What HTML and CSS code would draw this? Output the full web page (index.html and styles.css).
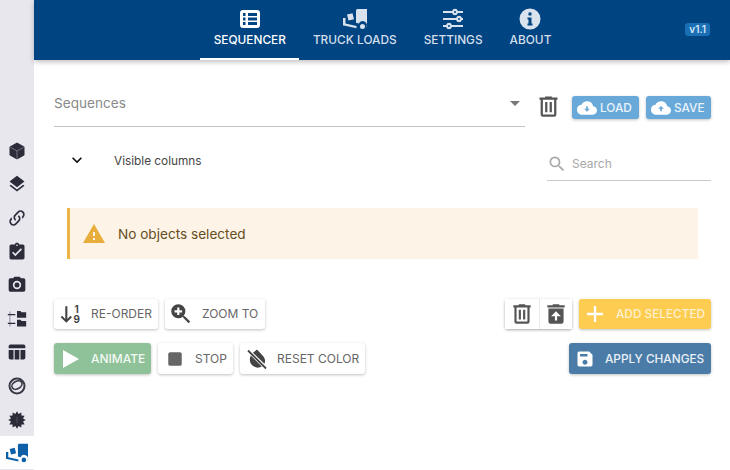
FILE: index.html
```html
<!DOCTYPE html>
<html lang="en">
<head>
<meta charset="utf-8">
<title>Sequencer</title>
<link rel="stylesheet" href="styles.css">
</head>
<body>
<div class="app">
  <aside class="rail">
    <div class="rail-item"><svg viewBox="0 0 24 24"><path d="M21 16.500c0 .38-.21.71-.53.88l-7.900 4.440c-.16.12-.36.18-.57.18s-.41-.06-.57-.18l-7.900-4.440A1 1 0 0 1 3 16.500v-9c0-.38.21-.71.53-.88l7.900-4.440c.16-.12.36-.18.57-.18s.41.06.57.18l7.900 4.440c.32.17.53.5.53.88v9z"/><path class="cut" d="M4 7.500l8 4.500 8-4.500M12 12v9.500"/></svg></div>
    <div class="rail-item"><svg viewBox="0 0 24 24"><path d="M12 16l7.360-5.730L21 9l-9-7-9 7 1.630 1.270M12 18.540l-7.380-5.730L3 14.070l9 7 9-7-1.630-1.270L12 18.540z"/></svg></div>
    <div class="rail-item"><svg viewBox="0 0 24 24"><path d="M10.590 13.410c.41.390.41 1.030 0 1.420-.39.390-1.030.390-1.420 0a5.003 5.003 0 0 1 0-7.070l3.540-3.540a5.003 5.003 0 0 1 7.070 0 5.003 5.003 0 0 1 0 7.070l-1.490 1.490c.01-.820-.12-1.640-.4-2.420l.47-.48a2.982 2.982 0 0 0 0-4.240 2.982 2.982 0 0 0-4.240 0l-3.530 3.530a2.982 2.982 0 0 0 0 4.240m2.820-4.240c.39-.39 1.030-.39 1.420 0a5.003 5.003 0 0 1 0 7.070l-3.540 3.540a5.003 5.003 0 0 1-7.070 0 5.003 5.003 0 0 1 0-7.070l1.490-1.490c-.01.820.12 1.640.4 2.430l-.47.470a2.982 2.982 0 0 0 0 4.240 2.982 2.982 0 0 0 4.240 0l3.530-3.530a2.982 2.982 0 0 0 0-4.240.973.973 0 0 1 0-1.420z"/></svg></div>
    <div class="rail-item"><svg viewBox="0 0 24 24"><path d="M19 3h-4.180C14.400 1.840 13.300 1 12 1c-1.300 0-2.400.84-2.820 2H5c-1.100 0-2 .9-2 2v14c0 1.100.9 2 2 2h14c1.100 0 2-.9 2-2V5c0-1.100-.9-2-2-2zm-7 0c.55 0 1 .45 1 1s-.45 1-1 1-1-.45-1-1 .45-1 1-1zm-2 14l-4-4 1.410-1.410L10 14.170l6.590-6.590L18 9l-8 8z"/></svg></div>
    <div class="rail-item"><svg viewBox="0 0 24 24"><path d="M4 4h3l2-2h6l2 2h3a2 2 0 0 1 2 2v12a2 2 0 0 1-2 2H4a2 2 0 0 1-2-2V6a2 2 0 0 1 2-2m8 3a5 5 0 0 0-5 5 5 5 0 0 0 5 5 5 5 0 0 0 5-5 5 5 0 0 0-5-5m0 2a3 3 0 0 1 3 3 3 3 0 0 1-3 3 3 3 0 0 1-3-3 3 3 0 0 1 3-3z"/></svg></div>
    <div class="rail-item"><svg viewBox="0 0 24 24"><path class="tree" d="M3.500 3v18"/><path d="M1 6h9v1.500H1zM1 16.500h9V18H1z"/><path d="M12 2.500h4l1.500 1.500H23v6.500H12zM12 13h4l1.500 1.500H23V21H12z"/></svg></div>
    <div class="rail-item"><svg viewBox="0 0 24 24"><path d="M4 3h16a2 2 0 0 1 2 2v2.500H2V5a2 2 0 0 1 2-2zM2 9.500h5.800V21H4a2 2 0 0 1-2-2zM9.200 9.500h5.600V21H9.200zM16.200 9.500H22V19a2 2 0 0 1-2 2h-3.800z"/></svg></div>
    <div class="rail-item"><svg viewBox="0 0 24 24"><circle cx="12" cy="12" r="9" class="ring"/><ellipse cx="12.500" cy="11" rx="6.500" ry="4.500" transform="rotate(-30 12 12)" class="ring-thin"/></svg></div>
    <div class="rail-item"><svg viewBox="0 0 24 24"><path d="M12 1.500 13.940 4.760 17.250 2.900 17.300 6.700 21.100 6.750 19.240 10.060 22.500 12 19.240 13.940 21.100 17.250 17.300 17.300 17.250 21.100 13.940 19.240 12 22.500 10.060 19.240 6.750 21.100 6.700 17.300 2.900 17.250 4.760 13.940 1.500 12 4.760 10.060 2.900 6.750 6.700 6.700 6.750 2.900 10.060 4.760z"/><path class="cut-fill" d="M11.400 8h1.200v8h-1.200z"/></svg></div>
    <div class="rail-item active"><svg viewBox="0 0 24 24"><path d="M0 11h2.500v5.500l11 2.500v2.200L1 18.500H0zM4 7.500l5.500-1.300 1.500 6-5.500 1.300zM14.500 2H24v18h-.5a4 4 0 0 0-7.500-3.500l-3-.7V3.500A1.500 1.500 0 0 1 14.500 2zM19.500 17a2.500 2.500 0 1 1 0 5 2.500 2.500 0 0 1 0-5z"/></svg></div>
  </aside>
  <div class="main">
    <header class="topbar">
      <div></div>
      <nav class="tabs">
        <a class="tab current"><svg viewBox="0 0 24 24"><path fill-rule="evenodd" d="M5 3h14a3 3 0 0 1 3 3v12a3 3 0 0 1-3 3H5a3 3 0 0 1-3-3V6a3 3 0 0 1 3-3zm0 3v3h2.500V6zm5 0v3h9V6zm-5 4.500v3h2.500v-3zm5 0v3h9v-3zM5 15v3h2.500v-3zm5 0v3h9v-3z"/></svg><span>SEQUENCER</span></a>
        <a class="tab"><svg viewBox="0 0 24 24"><path d="M0 11h2.500v5.500l11 2.500v2.200L1 18.500H0zM4 7.500l5.500-1.300 1.500 6-5.500 1.300zM14.500 2H24v18h-.5a4 4 0 0 0-7.500-3.500l-3-.7V3.500A1.500 1.500 0 0 1 14.500 2zM19.500 17a2.500 2.500 0 1 1 0 5 2.500 2.500 0 0 1 0-5z"/></svg><span>TRUCK LOADS</span></a>
        <a class="tab"><svg viewBox="0 0 24 24"><path d="M2 4h9.100a3 3 0 0 1 5.800 0H22v2h-5.100a3 3 0 0 1-5.800 0H2zm12 0a1 1 0 1 0 0 2 1 1 0 0 0 0-2zM2 11h13.100a3 3 0 0 1 5.800 0H22v2h-1.100a3 3 0 0 1-5.800 0H2zm16 0a1 1 0 1 0 0 2 1 1 0 0 0 0-2zM2 18h3.100a3 3 0 0 1 5.800 0H22v2H10.900a3 3 0 0 1-5.800 0H2zm6 0a1 1 0 1 0 0 2 1 1 0 0 0 0-2z" fill-rule="evenodd"/></svg><span>SETTINGS</span></a>
        <a class="tab"><svg viewBox="0 0 24 24"><path fill-rule="evenodd" d="M12 1.500a10.500 10.500 0 1 1 0 21 10.500 10.500 0 0 1 0-21zM10.500 5.500v3h3v-3zM9.500 10.500v2h1v4h-1v2h5v-2h-1v-6z"/></svg><span>ABOUT</span></a>
      </nav>
      <div class="version-wrap"><span class="version">v1.1</span></div>
    </header>
    <section class="content">
      <div class="seq-row">
        <div class="select"><span>Sequences</span><i class="caret"></i></div>
        <svg class="ico trash" viewBox="0 0 24 24"><path d="M9 3v1H4v2h1v13a2 2 0 0 0 2 2h10a2 2 0 0 0 2-2V6h1V4h-5V3H9M7 6h10v13H7V6m2 2v9h2V8H9m4 0v9h2V8h-2z"/></svg>
        <button class="btn blue load"><svg viewBox="0 0 24 24"><path fill-rule="evenodd" d="M19.350 10.040A7.490 7.490 0 0 0 12 4C9.110 4 6.600 5.640 5.350 8.040A5.994 5.994 0 0 0 0 14c0 3.310 2.690 6 6 6h13c2.760 0 5-2.240 5-5 0-2.640-2.050-4.780-4.650-4.960zM11 10h2v3h2.500L12 16.500 8.500 13H11z"/></svg>LOAD</button>
        <button class="btn blue save"><svg viewBox="0 0 24 24"><path fill-rule="evenodd" d="M19.350 10.040A7.490 7.490 0 0 0 12 4C9.110 4 6.600 5.640 5.350 8.040A5.994 5.994 0 0 0 0 14c0 3.310 2.690 6 6 6h13c2.760 0 5-2.240 5-5 0-2.640-2.050-4.780-4.650-4.960zM12 9.500l3.500 3.500H13v3h-2v-3H8.500z"/></svg>SAVE</button>
      </div>
      <div class="cols-row">
        <svg class="chev" viewBox="0 0 24 24"><path d="M7.410 8.590 12 13.170l4.590-4.580L18 10l-6 6-6-6z"/></svg>
        <span class="cols-label">Visible columns</span>
        <div class="search"><svg viewBox="0 0 24 24"><path d="M9.500 3a6.500 6.500 0 0 1 6.500 6.500c0 1.610-.59 3.090-1.560 4.230l.27.27h.79l5 5-1.500 1.500-5-5v-.79l-.27-.27A6.516 6.516 0 0 1 9.500 16 6.500 6.500 0 0 1 3 9.500 6.500 6.500 0 0 1 9.500 3m0 2C7 5 5 7 5 9.500S7 14 9.500 14 14 12 14 9.500 12 5 9.500 5z"/></svg><span>Search</span></div>
      </div>
      <div class="alert">
        <svg viewBox="0 0 24 24"><path d="M1 21h22L12 2 1 21zm12-3h-2v-2h2v2zm0-4h-2v-4h2v4z"/></svg>
        <span>No objects selected</span>
      </div>
      <div class="action-row first">
        <button class="btn plain reorder"><svg viewBox="0 0 24 24"><path d="M9 4v12.200l3-3 1.400 1.400L8 20 2.600 14.600 4 13.200l3 3V4z"/><text x="18" y="10.500" class="digit">1</text><text x="18" y="20.500" class="digit">9</text></svg>RE-ORDER</button>
        <button class="btn plain zoom"><svg viewBox="0 0 24 24"><path fill-rule="evenodd" d="M9.500 3a6.500 6.500 0 0 1 6.500 6.500c0 1.610-.59 3.090-1.560 4.230l.27.27h.79l5 5-1.500 1.500-5-5v-.79l-.27-.27A6.516 6.516 0 0 1 9.500 16 6.500 6.500 0 0 1 3 9.500 6.500 6.500 0 0 1 9.500 3zM8.500 6v2.500H6v2h2.500V13h2v-2.500H13v-2h-2.500V6z"/></svg>ZOOM TO</button>
        <div class="spacer"></div>
        <div class="icon-group">
          <button class="icon-btn"><svg viewBox="0 0 24 24"><path d="M9 3v1H4v2h1v13a2 2 0 0 0 2 2h10a2 2 0 0 0 2-2V6h1V4h-5V3H9M7 6h10v13H7V6m2 2v9h2V8H9m4 0v9h2V8h-2z"/></svg></button>
          <button class="icon-btn"><svg viewBox="0 0 24 24"><path fill-rule="evenodd" d="M9 3v1H4v2h16V4h-5V3zM5 7h14v12a2 2 0 0 1-2 2H7a2 2 0 0 1-2-2zm7 2.500L7.500 14H11v4h2v-4h3.500z"/></svg></button>
        </div>
        <button class="btn yellow add"><svg viewBox="0 0 24 24"><path d="M20 13.200h-6.800V20h-2.400v-6.800H4v-2.400h6.800V4h2.400v6.800H20z"/></svg>ADD SELECTED</button>
      </div>
      <div class="action-row second">
        <button class="btn green animate"><svg viewBox="0 0 24 24"><path d="M5 3 21 12 5 21z"/></svg>ANIMATE</button>
        <button class="btn plain stop"><svg viewBox="0 0 24 24"><rect x="3" y="3" width="18" height="18" rx="2.500"/></svg>STOP</button>
        <button class="btn plain reset"><svg viewBox="0 0 24 24"><path d="M12 2.500l6 6.500c2.400 2.900 2.500 5.700 1.400 7.800L8 5.800zM5.800 8.500 16.800 19.500A8 8 0 0 1 5 11z"/><path class="slash" d="M3 3.500 21 21.500"/></svg>RESET COLOR</button>
        <div class="spacer"></div>
        <button class="btn navy apply"><svg viewBox="0 0 24 24"><path fill-rule="evenodd" d="M17 3H5a2 2 0 0 0-2 2v14a2 2 0 0 0 2 2h14c1.100 0 2-.9 2-2V7l-4-4zm-5 16c-1.660 0-3-1.340-3-3s1.340-3 3-3 3 1.340 3 3-1.340 3-3 3zm3-10H6V6h9z"/></svg>APPLY CHANGES</button>
      </div>
    </section>
  </div>
</div>
</body>
</html>
```

FILE: styles.css
```css
* { box-sizing: border-box; }
html, body { margin: 0; height: 100%; background: #fff; overflow: hidden; }
body { font-family: Inter, "Liberation Sans", sans-serif; }
.app { display: flex; width: 730px; height: 470px; }

.rail { width: 34px; flex: none; background: #e7e7ed; display: flex; flex-direction: column; justify-content: flex-end; }
.rail-item { height: 33.6px; flex: none; display: flex; align-items: center; justify-content: center; }
.rail-item svg { width: 20px; height: 20px; fill: #2b2b3a; }
.rail-item .cut { fill: none; stroke: #8a8794; stroke-width: .9; }
.rail-item .cut-fill { fill: #55555f; }
.rail-item .tree { fill: none; stroke: #8f8c9e; stroke-width: 1.200; }
.rail-item .ring { fill: none; stroke: #3a3a47; stroke-width: 2.400; }
.rail-item .ring-thin { fill: none; stroke: #3a3a47; stroke-width: 2; }
.rail-item.active { background: #fff; border-bottom: 1px solid #e7e7ed; }
.rail-item.active svg { width: 22px; height: 22px; fill: #0f5fa8; }

.main { flex: 1; min-width: 0; display: flex; flex-direction: column; }
.topbar { height: 60px; flex: none; background: #004481; display: grid; grid-template-columns: 1fr auto 1fr; padding-left: 1px; box-shadow: 0 2px 5px rgba(0,0,0,.25); }
.tabs { display: flex; }
.tab { height: 60px; padding: 7px 13.5px 0; display: flex; flex-direction: column; align-items: center; color: #d3dfeb; font-size: 11.850px; font-weight: 500; line-height: 16px; border-bottom: 2px solid transparent; }
.tab svg { width: 24px; height: 24px; fill: #d9e3ee; margin-bottom: 1px; }
.tab.current { color: #fff; border-bottom-color: #fff; }
.tab.current svg { fill: #fff; }
.version-wrap { display: flex; justify-content: flex-end; align-items: center; padding-right: 20px; }
.version { background: #1a6fb5; color: #d6e6f4; font-size: 10px; font-weight: 600; line-height: 13px; padding: 0 4px; border-radius: 3px; margin-top: -1px; }

.content { padding: 0 19px 0 20px; }
.seq-row { display: flex; align-items: flex-start; height: 67px; }
.select { width: 471px; flex: none; height: 67px; padding-top: 35px; border-bottom: 1px solid #c4c4c4; display: flex; justify-content: space-between; font-size: 13.600px; line-height: 17px; color: #8a8a8a; }
.caret { width: 0; height: 0; border: 5px solid transparent; border-top-color: #777; border-bottom: 0; margin: 6px 5px 0 0; }
.ico.trash { width: 27px; height: 27px; fill: #555; flex: none; margin: 33px 10px 0 10px; }

.btn { border: 0; border-radius: 3px; font: 500 11.800px/16px Inter, "Liberation Sans", sans-serif; display: flex; align-items: center; padding: 0; box-shadow: 0 1px 3px rgba(0,0,0,.25); white-space: nowrap; }
.btn svg { fill: currentColor; flex: none; }
.blue { background: #68a9d9; color: #eaf3fa; height: 23px; margin-top: 36px; padding-left: 5px; flex: none; }
.blue svg { width: 20px; height: 20px; fill: #fff; margin-right: 3px; }
.load { width: 67px; }
.save { width: 65px; margin-left: 7px; }

.cols-row { display: flex; align-items: flex-start; height: 54px; }
.chev { width: 20px; height: 20px; fill: #111; margin: 23px 0 0 13px; }
.cols-label { font-size: 11.800px; line-height: 16px; color: #444; margin: 26px 0 0 27px; }
.search { margin-left: auto; width: 164px; height: 34px; margin-top: 20px; display: flex; align-items: center; gap: 5px; border-bottom: 1px solid #c9c9c9; color: #a8a8a8; font-size: 12px; }
.search svg { width: 20px; height: 20px; fill: #a8a8a8; }

.alert { margin: 27px 13px 0 13px; height: 51px; background: #fdf3e6; border-left: 3px solid #ebb547; display: flex; align-items: center; padding-left: 12px; gap: 12px; color: #664d1e; font-size: 13.600px; }
.alert svg { width: 24px; height: 24px; fill: #e8ae3c; flex: none; }

.action-row { display: flex; align-items: stretch; }
.action-row.first { margin-top: 40px; height: 30px; }
.action-row.second { margin-top: 14px; height: 31px; }
.spacer { flex: 1; }
.plain { background: #fff; color: #666; font-weight: 400; font-size: 12px; }
.plain svg { fill: #444; }
.reorder { width: 104px; padding-left: 4px; gap: 8px; }
.reorder svg { width: 25px; height: 25px; }
.digit { font: 700 9.500px Inter, "Liberation Sans", sans-serif; text-anchor: middle; fill: #444; }
.zoom { width: 100px; margin-left: 7px; padding-left: 3px; gap: 8px; }
.zoom svg { width: 26px; height: 26px; }
.icon-group { display: flex; border-radius: 3px; box-shadow: 0 1px 3px rgba(0,0,0,.35); margin-right: 7px; }
.icon-btn { width: 33.500px; border: 0; background: #fff; padding: 0; display: flex; align-items: center; justify-content: center; }
.icon-btn + .icon-btn { border-left: 1px solid #e8e8e8; }
.icon-btn svg { width: 26px; height: 26px; fill: #555; }
.yellow { background: #fdcc50; color: #fdf1d0; width: 132px; padding-left: 4px; gap: 9px; }
.yellow svg { width: 24px; height: 24px; fill: #fff; }
.green { background: #8fc298; color: #f3f9f4; width: 97px; padding-left: 4px; gap: 9px; font-size: 12px; }
.green svg { width: 24px; height: 24px; fill: #fff; }
.stop { width: 75px; margin-left: 7px; padding-left: 8px; gap: 11px; }
.stop svg { width: 18px; height: 18px; fill: #666; }
.reset { width: 125px; margin-left: 7px; padding-left: 5px; gap: 8px; }
.reset svg { width: 24px; height: 24px; }
.slash { fill: none; stroke: #444; stroke-width: 1.800; }
.navy { background: #4b7ca8; color: #e9f0f6; width: 142px; padding-left: 6px; gap: 10px; }
.navy svg { width: 20px; height: 20px; fill: #fff; }
```
